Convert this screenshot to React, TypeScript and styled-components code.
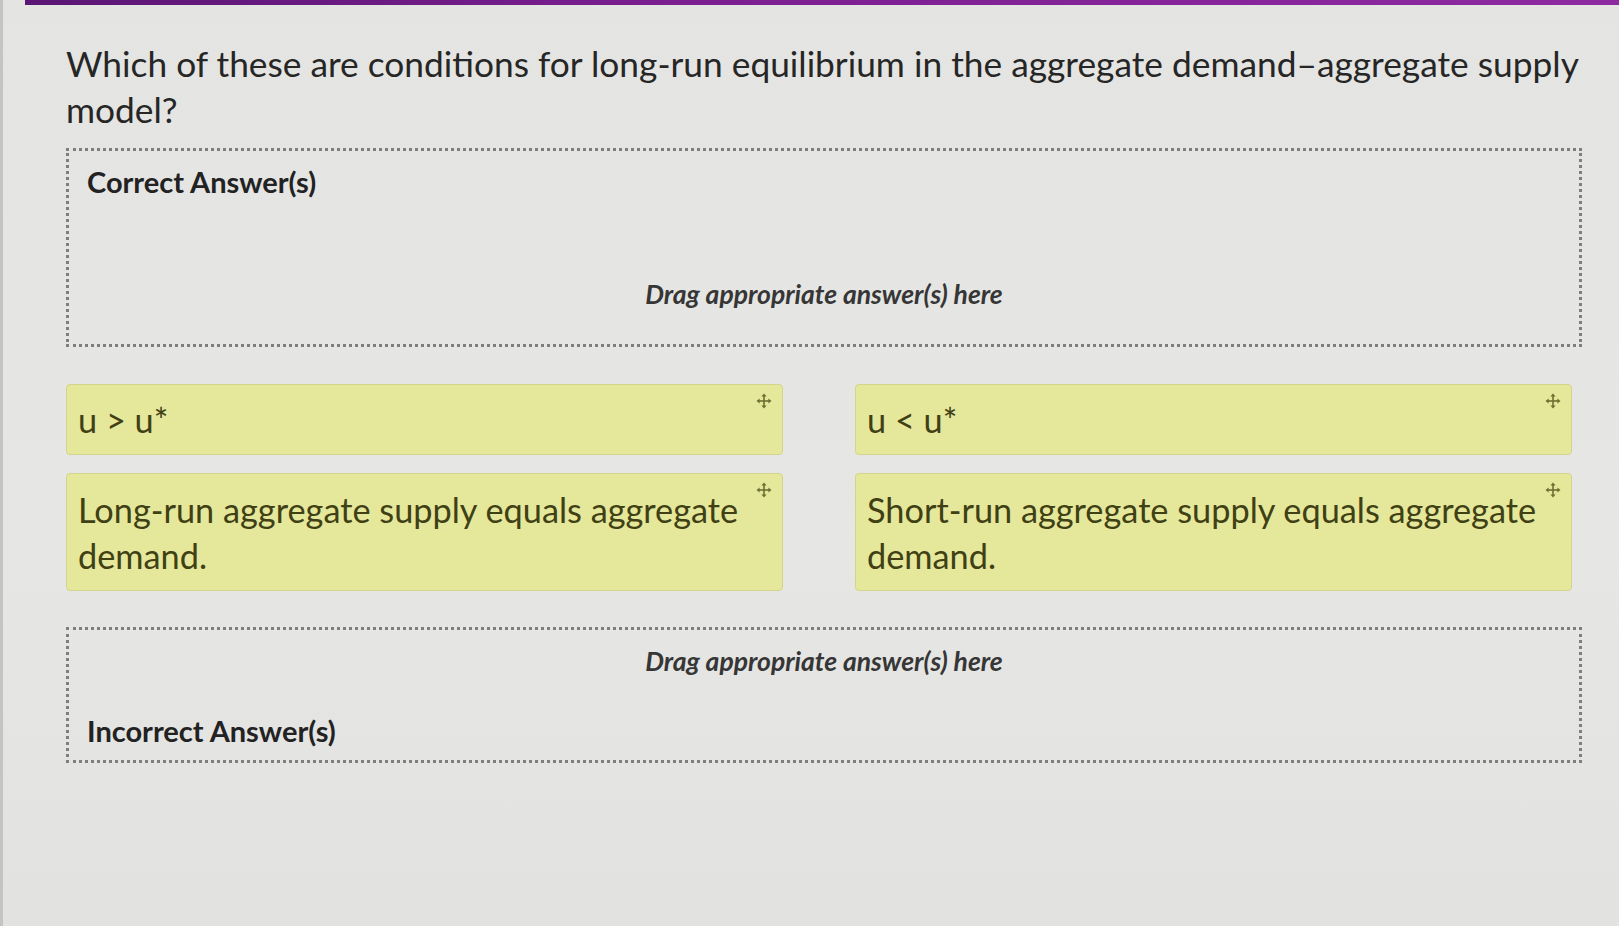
import React from "react";
import styled, { createGlobalStyle } from "styled-components";

const Global = createGlobalStyle`
  html, body { margin: 0; padding: 0; }
  body {
    background: #e3e3e1;
    font-family: Lato, "Open Sans", sans-serif;
    color: #262626;
    overflow: hidden;
  }
`;

const Page = styled.div`
  width: 1619px;
  height: 926px;
  box-sizing: border-box;
  border-left: 3px solid #c4c4c2;
  background: linear-gradient(180deg, #e4e4e2 0%, #e6e6e4 60%, #e2e2e0 100%);
  display: flex;
  flex-direction: column;
`;

const TopBar = styled.div`
  height: 5px;
  margin-left: 22px;
  background: linear-gradient(90deg, #5a1674 0%, #7a1e90 40%, #8e2aa0 100%);
`;

const Content = styled.div`
  width: 1516px;
  margin-left: 63px;
  padding-top: 36px;
  display: flex;
  flex-direction: column;
`;

const Question = styled.h1`
  margin: 0;
  font-size: 35.3px;
  font-weight: 400;
  line-height: 46px;
  color: #262626;
`;

const DropZone = styled.div<{ $height: number; $top: number }>`
  margin-top: ${(p) => p.$top}px;
  height: ${(p) => p.$height}px;
  box-sizing: border-box;
  border: 3px dotted #7e7e7e;
  display: flex;
  flex-direction: column;
  padding: 14px 18px 0;
`;

const ZoneLabel = styled.div<{ $bottom?: number }>`
  font-size: 29px;
  font-weight: 700;
  color: #222;
  line-height: 34px;
  margin-bottom: ${(p) => p.$bottom ?? 0}px;
`;

const DropHint = styled.div<{ $top?: number }>`
  margin-top: ${(p) => p.$top ?? 0}px;
  text-align: center;
  font-size: 26.5px;
  font-weight: 700;
  font-style: italic;
  color: #363636;
  line-height: 34px;
`;

const Spacer = styled.div`
  flex: 1;
`;

const CardGrid = styled.div`
  margin-top: 37px;
  margin-right: 10px;
  display: grid;
  grid-template-columns: 1fr 1fr;
  column-gap: 72px;
  row-gap: 18px;
`;

const Card = styled.div<{ $height: number }>`
  position: relative;
  height: ${(p) => p.$height}px;
  box-sizing: border-box;
  background: #e5e79b;
  border: 1px solid #d3d58a;
  border-radius: 4px;
  padding: ${(p) => (p.$height > 100 ? "13px 22px 0 11px" : "0 22px 0 11px")};
  display: flex;
  align-items: ${(p) => (p.$height > 100 ? "flex-start" : "center")};
  font-size: 34.3px;
  line-height: 46px;
  color: #3f4014;
`;

const MoveHandle = styled.span`
  position: absolute;
  top: 8px;
  right: 10px;
  width: 16px;
  height: 16px;
  color: #6e6f32;
  display: flex;
`;

const MoveIcon = () => (
  <svg width="16" height="16" viewBox="0 0 16 16" fill="currentColor">
    <rect x="7.2" y="3" width="1.6" height="10" />
    <rect x="3" y="7.2" width="10" height="1.6" />
    <polygon points="8,0.5 5.4,3.6 10.6,3.6" />
    <polygon points="8,15.5 5.4,12.4 10.6,12.4" />
    <polygon points="0.5,8 3.6,5.4 3.6,10.6" />
    <polygon points="15.5,8 12.4,5.4 12.4,10.6" />
  </svg>
);

const answers = [
  { text: "u > u*", h: 71 },
  { text: "u < u*", h: 71 },
  { text: "Long-run aggregate supply equals aggregate demand.", h: 118 },
  { text: "Short-run aggregate supply equals aggregate demand.", h: 118 },
];

export default function App() {
  return (
    <Page>
      <Global />
      <TopBar />
      <Content>
        <Question>
          Which of these are conditions for long-run equilibrium in the aggregate demand–aggregate supply model?
        </Question>
        <DropZone $top={15} $height={199}>
          <ZoneLabel>Correct Answer(s)</ZoneLabel>
          <DropHint $top={78}>Drag appropriate answer(s) here</DropHint>
        </DropZone>
        <CardGrid>
          {answers.map((a) => (
            <Card key={a.text} $height={a.h}>
              {a.text}
              <MoveHandle>
                <MoveIcon />
              </MoveHandle>
            </Card>
          ))}
        </CardGrid>
        <DropZone $top={36} $height={136}>
          <DropHint>Drag appropriate answer(s) here</DropHint>
          <Spacer />
          <ZoneLabel $bottom={12}>Incorrect Answer(s)</ZoneLabel>
        </DropZone>
      </Content>
    </Page>
  );
}
